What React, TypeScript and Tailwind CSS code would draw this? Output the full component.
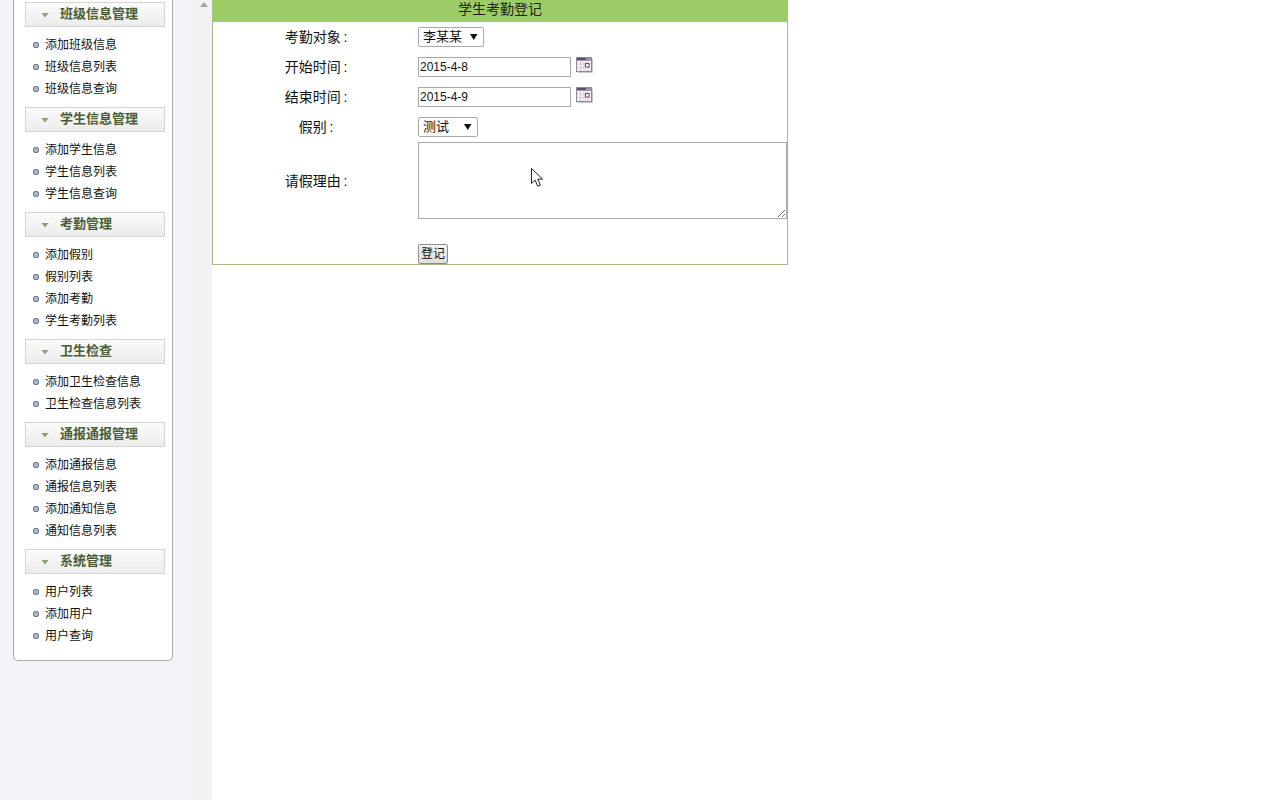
const cjk = { fontFamily: '"Liberation Sans", "Noto Sans CJK SC", sans-serif' };

const sections = [
  { title: "班级信息管理", items: ["添加班级信息", "班级信息列表", "班级信息查询"] },
  { title: "学生信息管理", items: ["添加学生信息", "学生信息列表", "学生信息查询"] },
  { title: "考勤管理", items: ["添加假别", "假别列表", "添加考勤", "学生考勤列表"] },
  { title: "卫生检查", items: ["添加卫生检查信息", "卫生检查信息列表"] },
  { title: "通报通报管理", items: ["添加通报信息", "通报信息列表", "添加通知信息", "通知信息列表"] },
  { title: "系统管理", items: ["用户列表", "添加用户", "用户查询"] },
];

function CalendarIcon() {
  return (
    <svg width="17" height="16" viewBox="0 0 17 16" className="block shrink-0">
      <rect x="0.5" y="0.5" width="15" height="14" fill="#f4f0f6" stroke="#8a8a96" />
      <rect x="1" y="1" width="14" height="2.5" fill="#55506e" />
      <rect x="10" y="1" width="5" height="2.5" fill="#9a96a8" />
      <path d="M4.5 4v10M8 4v10M11.5 4v10M1 7h14M1 10.5h14" stroke="#d8d0dc" strokeWidth="1" />
      <rect x="9.5" y="6.5" width="3.5" height="3.5" fill="#fff" stroke="#7a4a50" />
      <path d="M16.5 2v13.5H1.5" fill="none" stroke="#c8c8c8" />
    </svg>
  );
}

function FakeSelect({ label, width }: { label: string; width: string }) {
  return (
    <div className={`relative h-5 ${width}`}>
      <select
        defaultValue={label}
        style={cjk}
        className="block h-5 w-full appearance-none rounded-[2px] border border-[#a9a9a9] bg-white pl-1 text-[13px] leading-[18px] text-[#111]"
      >
        <option>{label}</option>
      </select>
      <svg width="8" height="6" viewBox="0 0 8 6" className="pointer-events-none absolute right-[6px] top-[7px]">
        <path d="M0 0h7.5L3.75 6z" fill="#111" />
      </svg>
    </div>
  );
}

function Row({ label, height, labelClass = "", children }: { label: string; height: string; labelClass?: string; children: React.ReactNode }) {
  return (
    <div className={`flex items-center ${height}`}>
      <div className={`w-[205px] pl-[1px] text-center text-[14px] text-[#111] ${labelClass}`}>{label}</div>
      <div className="flex items-center">{children}</div>
    </div>
  );
}

export default function App() {
  return (
    <div className="flex h-screen w-full overflow-hidden bg-white" style={cjk}>
      <aside className="h-full w-[195px] shrink-0 bg-[#f5f3f7] pl-[13px]">
        <div className="w-[160px] rounded-b-[5px] border-x border-b border-[#a8a8a8] bg-white pb-[13px] pl-[11px] pr-[7px] pt-[2px]">
          {sections.map((s) => (
            <section key={s.title} className="mb-[7px] last:mb-0">
              <div className="flex h-[25px] items-center border border-[#d4d4d4] bg-gradient-to-b from-[#fbfbfb] to-[#ececec] pb-[2px] pl-[15px]">
                <svg width="8" height="5" viewBox="0 0 8 5" className="mr-[11px] mt-[3px] shrink-0">
                  <path d="M0.5 0h7L4 4.5z" fill="#8a9f78" />
                </svg>
                <span className="text-[13px] font-bold text-[#4a5d34]">{s.title}</span>
              </div>
              <ul className="mt-[7px]">
                {s.items.map((it) => (
                  <li key={it} className="flex h-[22px] items-center pl-[8px] text-[12px] text-[#111]">
                    <span className="mr-[6px] h-[6px] w-[6px] rounded-[2px] border border-[#6b7a92] bg-[#aab6cc]" />
                    {it}
                  </li>
                ))}
              </ul>
            </section>
          ))}
        </div>
      </aside>

      <div className="flex h-full w-[17px] shrink-0 justify-center bg-[#f2f1f4] pt-[2px]">
        <svg width="8" height="5" viewBox="0 0 8 5">
          <path d="M4 0l4 5H0z" fill="#a6a6a6" />
        </svg>
      </div>

      <main className="w-[576px] shrink-0 self-start">
        <div className="flex h-[22px] items-center justify-center bg-[#9ccc65] pb-[4px] text-[14px] text-[#222]">学生考勤登记</div>
        <div className="h-[243px] border-x border-b border-[#a9b98a] pt-[5px]">
          <Row label={"考勤对象\u2009:"} height="h-[20px]">
            <FakeSelect label="李某某" width="w-[66px]" />
          </Row>
          <Row label={"开始时间\u2009:"} height="mt-[10px] h-[20px]">
            <input
              readOnly
              value="2015-4-8"
              className="h-5 w-[153px] border border-[#a9a9a9] bg-white px-[1px] text-[12px] text-[#111]"
            />
            <span className="mb-[5px] ml-[5px]"><CalendarIcon /></span>
          </Row>
          <Row label={"结束时间\u2009:"} height="mt-[10px] h-[20px]">
            <input
              readOnly
              value="2015-4-9"
              className="h-5 w-[153px] border border-[#a9a9a9] bg-white px-[1px] text-[12px] text-[#111]"
            />
            <span className="mb-[5px] ml-[5px]"><CalendarIcon /></span>
          </Row>
          <Row label={"假别\u2009:"} height="mt-[10px] h-[20px]">
            <FakeSelect label="测试" width="w-[60px]" />
          </Row>
          <Row label={"请假理由\u2009:"} height="mt-[5px] h-[77px]" labelClass="pt-[2px]">
            <textarea className="block h-[77px] w-[369px] border border-[#a9a9a9] bg-white" />
          </Row>
          <div className="mt-[25px] pl-[205px]">
            <button
              style={cjk}
              className="block h-5 w-[30px] rounded-[2px] border border-[#8e8e8e] bg-gradient-to-b from-[#f4f4f4] to-[#dcdcdc] text-center text-[12px] leading-[18px] text-[#111]"
            >
              登记
            </button>
          </div>
        </div>
      </main>

      <svg width="14" height="20" viewBox="0 0 14 20" className="pointer-events-none absolute left-[531px] top-[168px]">
        <path d="M0.5 0.5v15l3.6-3.4 2.6 6.2 2.7-1.2-2.6-6h4.9z" fill="#fff" stroke="#222" strokeWidth="1" />
      </svg>
    </div>
  );
}
